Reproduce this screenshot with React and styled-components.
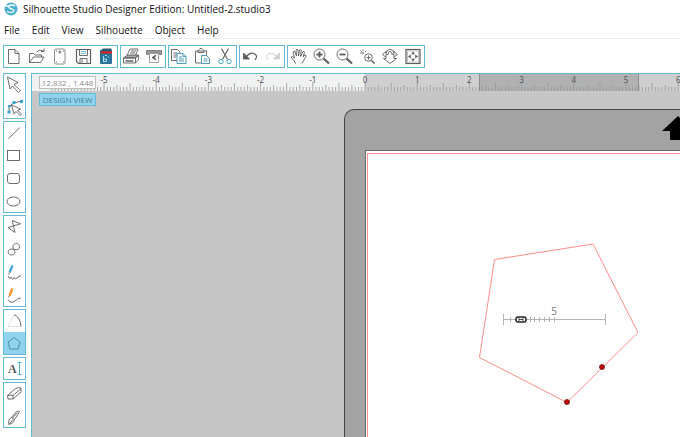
import React from "react";
import styled, { createGlobalStyle } from "styled-components";

const accent = "#62bcd6";
const ink = "#5c5c5e";
const INCH = 52.2;
const ORIGIN = 333;

const GlobalStyle = createGlobalStyle`
  * {
    box-sizing: border-box;
  }
  body {
    margin: 0;
    background: #fff;
    font-family: "Open Sans", "Noto Sans", sans-serif;
  }
`;

const App = styled.div`
  display: flex;
  flex-direction: column;
  height: 100vh;
  overflow: hidden;
`;

const TitleBar = styled.header`
  display: flex;
  align-items: center;
  gap: 5px;
  height: 18px;
  padding-left: 4px;
`;

const Title = styled.h1`
  margin: 0;
  font-size: 10px;
  font-weight: 400;
  line-height: 16px;
  color: #111;
  white-space: nowrap;
`;

const MenuBar = styled.nav`
  display: flex;
  gap: 12px;
  height: 21px;
  padding: 4px 4px 0;
  border-bottom: 1px solid #e9eef0;
`;

const MenuItem = styled.button`
  padding: 0;
  border: 0;
  background: none;
  font: inherit;
  font-size: 10px;
  line-height: 16px;
  height: 16px;
  color: #111;
`;

const ToolBar = styled.div`
  display: flex;
  gap: 2px;
  padding: 6px 3px 5px;
`;

const Group = styled.div`
  display: flex;
  flex: none;
  flex-direction: ${(props) => (props.$vertical ? "column" : "row")};
  outline: 1px solid ${accent};
  outline-offset: -1px;
`;

const ToolButton = styled.button`
  display: block;
  width: 23px;
  height: 23px;
  padding: 0;
  border: 0;
  background: ${(props) => (props.$active ? "#8fd3ec" : "none")};
`;

const Icon = styled.svg`
  display: block;
  width: 23px;
  height: 23px;
  fill: none;
  stroke: ${ink};
  stroke-width: 0.9;
`;

const Logo = styled.svg`
  flex: none;
  width: 14px;
  height: 14px;
`;

const Main = styled.main`
  display: flex;
  flex: 1;
  min-height: 0;
`;

const SideBar = styled.div`
  display: flex;
  flex: none;
  flex-direction: column;
  align-items: flex-start;
  gap: 2px;
  width: 31px;
  padding-left: 3px;
`;

const Workspace = styled.section`
  position: relative;
  display: flex;
  flex: 1;
  flex-direction: column;
  min-width: 0;
  border-top: 1px solid ${accent};
  border-left: 1px solid ${accent};
  background: #c6c6c6;
`;

const RulerStrip = styled.svg`
  flex: none;
  display: block;
  width: 100%;
  height: 17px;
  background: #cfcfcf;
  font-family: "Noto Sans", sans-serif;
  font-size: 8px;
`;

const Badges = styled.div`
  position: absolute;
  top: 2px;
  left: 7px;
  display: flex;
  flex-direction: column;
  gap: 4px;
  width: 57px;
`;

const Badge = styled.div`
  height: 13px;
  border: 1px solid ${(props) => (props.$blue ? accent : "#bdbdbd")};
  background: ${(props) => (props.$blue ? "#8fd3ec" : "#fff")};
  color: ${(props) => (props.$blue ? "#4b8199" : "#8b8b8b")};
  font-size: 8px;
  line-height: 11px;
  text-align: center;
  white-space: pre;
`;

const Canvas = styled.div`
  position: relative;
  flex: 1;
  min-height: 0;
  padding: 18px 0 0 312px;
`;

const Mat = styled.div`
  height: 100%;
  padding: 40px 0 0 20px;
  border: 1px solid #444;
  border-right: 0;
  border-bottom: 0;
  border-top-left-radius: 10px;
  background: #a3a3a3;
`;

const Page = styled.div`
  height: 100%;
  padding: 2px 0 0 1px;
  border-top: 1px solid #6a6a6a;
  border-left: 1px solid #6a6a6a;
  background: #fff;
`;

const CutArea = styled.div`
  height: 100%;
  border-top: 1px solid #ff8f8f;
  border-left: 1px solid #ff8f8f;
`;

const Artwork = styled.svg`
  position: absolute;
  top: 0;
  left: 0;
  width: 100%;
  height: 100%;
  font-size: 10px;
`;

const icons = {
  New: <path d="M5.500 4.500h6.500l4 4v10H5.500zM12 4.500v4h4" />,
  Open: (
    <>
      <path d="M3.500 17.500v-9h4l1.500 1.500h6.500v2M3.500 17.500l4-5.500h10.500l-3.500 5.500z" />
      <path d="M10.500 7q3-3.500 7-1M18 3.500v3h-3" />
    </>
  ),
  "Open library": (
    <>
      <rect x="5.500" y="4" width="10.500" height="15" rx="1.500" stroke="#808080" />
      <path d="M10.800 5.500v3M9.300 7h3" />
      <path d="M7 6h1M14 6h1M7 17h1M14 17h1" />
    </>
  ),
  Save: (
    <>
      <path strokeWidth="1.200" d="M4.500 4.500h14v14h-12l-2-2z" />
      <path d="M7.500 4.500v6h8v-6M8 18.500v-5h7v5M10 14v4" />
      <path stroke="#5bb5d5" d="M9 6.500h5M9 8.500h5" />
    </>
  ),
  "Save to SD card": (
    <>
      <path fill="#26789e" stroke="#26688a" d="M5.500 5.500h11v13h-11z" />
      <path fill="#2a5872" stroke="none" d="M5 6l3-2.500h8.500v3H5z" />
      <path stroke="#dc2020" strokeWidth="2.200" d="M6 7.500h11" />
      <path stroke="#bfe4f2" d="M8.500 11v5.500M8.500 14h3v2.500H8M13.500 11.500v1M10 10.500h2" />
    </>
  ),
  Print: (
    <>
      <path d="M7 10.500l3-6.500h8l-2.500 6.500M11 6h5M10 8h5" />
      <path fill="#aaa" d="M3.500 13l4-3h11l-3 3z" />
      <path d="M3.500 13h12v5h-12zM15.500 13l3-3v4.500l-3 3.500" />
      <path strokeWidth="1.500" d="M5.500 16h8" />
    </>
  ),
  Send: (
    <>
      <path fill="#9b9b9b" stroke="#777" d="M3.500 5.500h15v4h-2V8h-11v1.500h-2z" />
      <path fill="#fff" stroke="#999" d="M6.500 8.500h9v9h-9z" />
      <path fill={ink} stroke={ink} d="M13 10l-4 2.500 4 2.500-1.500-2.500z" />
    </>
  ),
  Copy: (
    <>
      <path d="M3.500 4.500h6l2.500 2.500v8.500H3.500zM5.500 8h4M5.500 10h4M5.500 12h3" />
      <path fill="#fff" stroke="#3b91b8" d="M9 8.500h6l3 3v7H9zM15 8.500v3h3M11 12h3M11 14h5M11 16h5" />
    </>
  ),
  Paste: (
    <>
      <path d="M4.500 6h11v12h-11zM7 7.500V5.500l2-2h2l2 2v2z" />
      <path fill="#fff" stroke="#3b91b8" d="M10.500 10.500h5l3 3v5h-8zM12.500 14h4M12.500 16h4" />
    </>
  ),
  Cut: (
    <>
      <path strokeWidth="1.100" d="M7.500 3.500l6 11M14.500 3.500l-6 11" />
      <circle cx="7" cy="16.500" r="2.200" stroke="#3b9fc6" />
      <circle cx="15" cy="16.500" r="2.200" stroke="#3b9fc6" />
    </>
  ),
  Undo: (
    <>
      <path fill={ink} d="M4.500 8v6h6z" />
      <path strokeWidth="1.200" d="M7 12q4-5 8-3.500q4.500 2 1 6.500" />
    </>
  ),
  Redo: (
    <g stroke="#cfcfcf">
      <path fill="#cfcfcf" d="M17.500 8v6h-6z" />
      <path d="M15 12q-4-5-8-3.500q-4.500 2-1 6.500" />
    </g>
  ),
  Pan: (
    <path d="M8.500 18.500q-1-3-4.500-6.500q1-1.500 3.500 1L6 7q1-1.500 2 0l1.500 4L9 5q1-1.500 2 0l.5 6 1-6q1.200-1.200 1.800 0L13.500 11.500l2.500-5q1.500-.5 1.500 1L16 12l2-2q1.500 0 1 1.500l-4 7" />
  ),
  "Zoom in": (
    <>
      <circle cx="9.500" cy="9.500" r="5.500" />
      <path strokeWidth="1.800" d="M6.500 9.500h6M9.500 6.500v6" />
      <path strokeWidth="2.200" d="M13.500 13.500l5.500 5" />
    </>
  ),
  "Zoom out": (
    <>
      <circle cx="9.500" cy="9.500" r="5.500" />
      <path strokeWidth="1.800" d="M6.500 9.500h6" />
      <path strokeWidth="2.200" d="M13.500 13.500l5.500 5" />
    </>
  ),
  "Zoom selection": (
    <>
      <circle cx="12.500" cy="12.500" r="3.800" />
      <path d="M10.500 12.500h4M12.500 10.500v4" />
      <path strokeWidth="1.500" d="M15.500 15.500l3 3" />
      <path strokeDasharray="1.500 1" d="M4 8h4M7 4.500v4M9 7l2-2M4.500 5.500l2 2" />
    </>
  ),
  "Zoom drag": (
    <path d="M3.500 9.500L7 6.500v2q0-4 4-4t4 4v-2l3.500 3-3 2H15V9.500h-2q0-3-2-3t-2 3H7v2H6zM7 11.500v2H4.500l6.500 5 6.500-5H15v-2" />
  ),
  "Fit to window": (
    <>
      <rect x="4" y="4.500" width="14" height="14" strokeWidth="1.200" />
      <rect x="5.500" y="6" width="11" height="11" stroke="#bbb" />
      <path
        fill={ink}
        stroke="none"
        d="M11 6.500l2 2.800H9zM11 16.500l2-2.800H9zM6 11.500l2.800-2v4zM16 11.500l-2.800-2v4z"
      />
    </>
  ),
  Select: <path d="M5.500 4l2.500 12 2.500-3 6 6.500 2-2-6.500-6 4-2z" />,
  "Edit points": (
    <>
      <path d="M7 15.500Q5.500 7 18 5.500" />
      <path fill="#fff" d="M9.500 9l2.500 9 2-2.500 4 4 1.500-1.500-4-3.500 3-1.500z" />
      <path
        fill="#3ba6cf"
        stroke="none"
        d="M5.500 14.500h3v3h-3zM6 9h2.500v2.500H6zM10.500 5h3v3h-3zM18 4h3v3h-3z"
      />
    </>
  ),
  Line: <path d="M6.500 17.500L18 6.500" />,
  Rectangle: <rect x="5.500" y="6.500" width="12" height="10" />,
  "Rounded rectangle": <rect x="5.500" y="6.500" width="12" height="10" rx="2.500" />,
  Ellipse: <ellipse cx="11.500" cy="11.500" rx="6.500" ry="4.500" />,
  Polygon: <path d="M10.300 5.500L13 17.500 6 12.500 18.500 8.800z" />,
  Curve: (
    <path d="M12 11.500C9.500 8 12 5.500 14.500 5.500C18 6 18.500 10 16 11.500C14 12.500 9.500 10 7.500 11.500C5 13.500 6.500 17 9.500 17C12.500 17 14 14.500 12 11.500z" />
  ),
  Freehand: (
    <>
      <path stroke="#3ba6cf" strokeWidth="2.200" d="M10.500 4.500l-3 7" />
      <path d="M7.500 11.500l-.7 2M6 15q2 4 3 1q1.500 4 3 .5q2 3 3 0q1 1 2-1.500h2" />
    </>
  ),
  "Smooth freehand": (
    <>
      <path stroke="#f79433" strokeWidth="2.600" d="M10.500 4.500l-3 7" />
      <path d="M7.500 11.500l-.8 2M6 15.500q1.500 4 5 2.500t5-3.500l3-.5" />
    </>
  ),
  Arc: (
    <>
      <path stroke="#dedede" d="M12 5.500L6 17.500h13" />
      <path d="M12 5.500q6.500 3 7 12" />
    </>
  ),
  "Regular polygon": <path stroke="#4f88a0" d="M12 5.500l6 4.500-2 7H8L6 10z" />,
  Text: (
    <>
      <text
        x="6"
        y="16"
        fill={ink}
        stroke="none"
        fontFamily="Liberation Serif, serif"
        fontWeight="bold"
        fontSize="12"
      >
        A
      </text>
      <path stroke="#3ba6cf" d="M15.500 5.500h4M17.500 5.500v12M15.500 17.500h4" />
    </>
  ),
  Eraser: (
    <path d="M5.500 13.500l8-7q3-1.500 5.500-.5v4l-8 7h-5zM5.500 13.500q3-.5 5.500 0l8-7M11 13.500v3.500" />
  ),
  Knife: (
    <>
      <path d="M9.500 12.500l5-6q2.500-1.500 3 .5l-5 7.500zM10.500 13l5-5.500" />
      <path d="M9.500 12.500q-4 2-2.500 7q4.500-1 5.500-5M7 19.500l4-5" />
    </>
  ),
};

const toolbarGroups = [
  ["New", "Open", "Open library", "Save", "Save to SD card"],
  ["Print", "Send"],
  ["Copy", "Paste", "Cut"],
  ["Undo", "Redo"],
  ["Pan", "Zoom in", "Zoom out", "Zoom selection", "Zoom drag", "Fit to window"],
];

const sidebarGroups = [
  ["Select", "Edit points"],
  ["Line", "Rectangle", "Rounded rectangle", "Ellipse"],
  ["Polygon", "Curve", "Freehand", "Smooth freehand"],
  ["Arc", "Regular polygon"],
  ["Text"],
  ["Eraser", "Knife"],
];

const menus = ["File", "Edit", "View", "Silhouette", "Object", "Help"];

const Tools = (props) => {
  return (
    <Group $vertical={props.vertical}>
      {props.names.map((name) => (
        <ToolButton key={name} aria-label={name} $active={name === "Regular polygon"}>
          <Icon viewBox={props.vertical ? "1 0 23 23" : "0 0 23 23"}>{icons[name]}</Icon>
        </ToolButton>
      ))}
    </Group>
  );
};

const Ruler = () => {
  const ticks = [];
  for (let i = -6 * 16; i <= 20 * 16; i++) {
    const size = i % 16 === 0 ? 9 : i % 8 === 0 ? 8 : i % 4 === 0 ? 6 : 4;
    ticks.push(`M${(ORIGIN + (i * INCH) / 16).toFixed(1)} 17v-${size}`);
  }
  const labels = [-5, -4, -3, -2, -1, 0, 1, 2, 3, 4, 5, 6];

  return (
    <RulerStrip>
      <rect width={ORIGIN} height="17" fill="#f0f2f2" />
      <rect x="447" width="159" height="17" fill="#b0b1b2" />
      <path d={ticks.join("")} stroke="#979797" strokeWidth="0.800" />
      <path d="M447.500 0v17M606.500 0v17" stroke="#8b8b8b" />
      {labels.map((n) => (
        <text key={n} x={ORIGIN + n * INCH} y="9" textAnchor="middle" fill="#555">
          {n}
        </text>
      ))}
    </RulerStrip>
  );
};

const Drawing = () => {
  return (
    <Artwork>
      <path d="M646 25l-16 15h8v9h16v-9h8z" fill="#000" />
      <path
        d="M462.500 168.500L561 153l45 88.500L535 311.500 447.500 266.500z"
        fill="none"
        stroke="#ff8f8a"
      />
      <path
        d="M471.500 228.500h102M471.500 223v11M573.500 223v11M478.500 226v5M498.500 226v5M502.500 226v5M507.500 226v5M512.500 226v5M517.500 226v5M522.500 226v5"
        stroke="#b4b4b4"
        fill="none"
      />
      <rect x="484" y="226" width="10" height="5" rx="2" fill="#fff" stroke="#222" strokeWidth="1.500" />
      <path d="M487 227v3M491 227v3M487 228.500h4" stroke="#222" strokeWidth="0.800" />
      <text x="522" y="224" textAnchor="middle" fill="#777">
        5
      </text>
      <circle cx="535" cy="311" r="2.500" fill="#c40000" stroke="#5a1010" strokeWidth="0.800" />
      <circle cx="570" cy="276" r="2.500" fill="#c40000" stroke="#5a1010" strokeWidth="0.800" />
    </Artwork>
  );
};

const SilhouetteStudio = () => {
  return (
    <App>
      <GlobalStyle />
      <TitleBar>
        <Logo viewBox="0 0 14 14">
          <circle cx="7" cy="7" r="6.500" fill="#4eb0d0" />
          <path
            d="M1 3.500l4 1M11 4Q7 2 5 4q-1 2 3 3q3 1 1 3q-2 1-6-.5"
            fill="none"
            stroke="#fff"
            strokeWidth="1.300"
          />
        </Logo>
        <Title>Silhouette Studio Designer Edition: Untitled-2.studio3</Title>
      </TitleBar>
      <MenuBar>
        {menus.map((menu) => (
          <MenuItem key={menu}>{menu}</MenuItem>
        ))}
      </MenuBar>
      <ToolBar>
        {toolbarGroups.map((names) => (
          <Tools key={names[0]} names={names} />
        ))}
      </ToolBar>
      <Main>
        <SideBar>
          {sidebarGroups.map((names) => (
            <Tools key={names[0]} names={names} vertical />
          ))}
        </SideBar>
        <Workspace>
          <Ruler />
          <Canvas>
            <Mat>
              <Page>
                <CutArea />
              </Page>
            </Mat>
            <Drawing />
          </Canvas>
          <Badges>
            <Badge>12.832 , 1.448</Badge>
            <Badge $blue>DESIGN VIEW</Badge>
          </Badges>
        </Workspace>
      </Main>
    </App>
  );
};

export default SilhouetteStudio;
